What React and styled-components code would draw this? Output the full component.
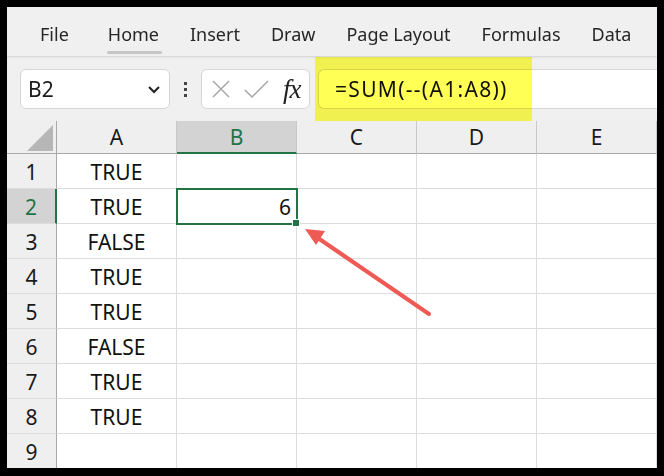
import React from 'react';
import styled, { createGlobalStyle } from 'styled-components';

const GlobalStyle = createGlobalStyle`
  html, body {
    margin: 0;
    background: #000;
  }
  body {
    padding: 7px 7px 8px 7px;
    font-family: "Noto Sans", "Open Sans", sans-serif;
  }
`;

const Window = styled.div`
  width: 650px;
  height: 461px;
  background: #f0f0f0;
  overflow: hidden;
  position: relative;
`;

const Ribbon = styled.div`
  height: 50px;
  display: flex;
  align-items: center;
  gap: 31px;
  padding: 5px 0 0 33px;
  box-sizing: border-box;
  border-bottom: 1px solid #dadada;
  box-shadow: 0 1px 2px rgba(0, 0, 0, 0.06);
  position: relative;
  z-index: 1;
`;

const Tab = styled.div`
  font-size: 18px;
  color: #262626;
  position: relative;
  margin-right: ${p => (p.$wide ? '8px' : '0')};

  ${p => p.$active && `
    &::after {
      content: '';
      position: absolute;
      left: -1px;
      right: -3px;
      bottom: -8px;
      height: 3px;
      border-radius: 2px;
      background: #c6c6c6;
    }
  `}
`;

const FormulaBar = styled.div`
  height: 64px;
  display: flex;
  align-items: center;
  padding-left: 13px;
  position: relative;
`;

const NameBox = styled.div`
  width: 150px;
  height: 40px;
  box-sizing: border-box;
  background: #fff;
  border: 1px solid #d6d6d6;
  border-radius: 6px;
  display: flex;
  align-items: center;
  justify-content: space-between;
  padding: 0 8px 0 7px;
  font-size: 21px;
  color: #1a1a1a;
`;

const Kebab = styled.div`
  width: 31px;
  display: flex;
  flex-direction: column;
  align-items: center;
  gap: 3px;

  span {
    width: 3px;
    height: 3px;
    background: #444;
  }
`;

const FxBox = styled.div`
  width: 109px;
  height: 40px;
  box-sizing: border-box;
  background: #fff;
  border: 1px solid #d6d6d6;
  border-radius: 6px;
  display: flex;
  align-items: center;
  padding-left: 9px;
  gap: 13px;
`;

const Fx = styled.span`
  font-family: "Liberation Serif", serif;
  font-style: italic;
  font-size: 27px;
  color: #222;
  margin-left: 1px;
  letter-spacing: -1px;
`;

const FormulaInput = styled.div`
  flex: 1;
  margin-left: 8px;
  height: 40px;
  box-sizing: border-box;
  background: #fff;
  border: 1px solid #d6d6d6;
  border-right: none;
  border-radius: 6px 0 0 6px;
  display: flex;
  align-items: center;
  padding-left: 16px;
  font-size: 21px;
  color: #111;
  letter-spacing: 1.3px;
`;

const Highlight = styled.div`
  position: absolute;
  left: 308px;
  top: 0;
  width: 217px;
  height: 64px;
  background: #ffff55;
  mix-blend-mode: multiply;
  pointer-events: none;
`;

const Sheet = styled.div`
  display: grid;
  grid-template-columns: 50px repeat(5, 120px);
  grid-template-rows: 33px repeat(9, 35px);
  background: #fff;
  position: relative;
`;

const Corner = styled.div`
  background: #efefef;
  border-right: 1px solid #a8a8a8;
  border-bottom: 1px solid #a8a8a8;
  box-sizing: border-box;
  position: relative;

  &::after {
    content: '';
    position: absolute;
    right: 3px;
    bottom: 2px;
    border-style: solid;
    border-width: 0 0 26px 26px;
    border-color: transparent transparent #b6b6b6 transparent;
  }
`;

const ColHead = styled.div`
  box-sizing: border-box;
  background: ${p => (p.$sel ? '#d3d3d3' : '#efefef')};
  color: ${p => (p.$sel ? '#217346' : '#1a1a1a')};
  border-right: 1px solid #c8c8c8;
  border-bottom: ${p => (p.$sel ? '2px solid #217346' : '1px solid #a8a8a8')};
  display: flex;
  align-items: center;
  justify-content: center;
  font-size: 21px;
`;

const RowHead = styled.div`
  box-sizing: border-box;
  background: ${p => (p.$sel ? '#d3d3d3' : '#efefef')};
  color: ${p => (p.$sel ? '#217346' : '#1a1a1a')};
  border-right: ${p => (p.$sel ? '2px solid #217346' : '1px solid #a8a8a8')};
  border-bottom: 1px solid #dcdcdc;
  display: flex;
  align-items: center;
  justify-content: center;
  padding-top: 2px;
  font-size: 21px;
`;

const Cell = styled.div`
  box-sizing: border-box;
  border-right: 1px solid #dcdcdc;
  border-bottom: 1px solid #dcdcdc;
  display: flex;
  align-items: center;
  justify-content: ${p => (p.$right ? 'flex-end' : 'center')};
  padding-right: ${p => (p.$right ? '5px' : '0')};
  padding-top: 2px;
  font-size: 21px;
  color: #111;
  position: relative;

  ${p => p.$active && `
    outline: 2px solid #217346;
    outline-offset: -1px;
    z-index: 2;
    &::after {
      content: '';
      position: absolute;
      right: -4px;
      bottom: -4px;
      width: 6px;
      height: 6px;
      background: #217346;
      border: 1px solid #fff;
    }
  `}
`;

const ArrowLayer = styled.svg`
  position: absolute;
  left: 0;
  top: 0;
  width: 650px;
  height: 348px;
  pointer-events: none;
  z-index: 3;
`;

const tabs = ['File', 'Home', 'Insert', 'Draw', 'Page Layout', 'Formulas', 'Data'];
const cols = ['A', 'B', 'C', 'D', 'E'];
const colA = ['TRUE', 'TRUE', 'FALSE', 'TRUE', 'TRUE', 'FALSE', 'TRUE', 'TRUE', ''];

export default function App() {
  return (
    <>
      <GlobalStyle />
      <Window>
        <Ribbon>
          {tabs.map(t => (
            <Tab key={t} $active={t === 'Home'} $wide={t === 'File'}>{t}</Tab>
          ))}
        </Ribbon>
        <FormulaBar>
          <NameBox>
            <span>B2</span>
            <svg width="14" height="10" viewBox="0 0 14 10">
              <path d="M2 3 L7 8 L12 3" fill="none" stroke="#222" strokeWidth="2" />
            </svg>
          </NameBox>
          <Kebab><span /><span /><span /></Kebab>
          <FxBox>
            <svg width="20" height="20" viewBox="0 0 20 20">
              <path d="M2 2 L18 18 M18 2 L2 18" stroke="#a6a6a6" strokeWidth="1.5" />
            </svg>
            <svg width="25" height="20" viewBox="0 0 25 20">
              <path d="M1 11 L8 18 L24 2" fill="none" stroke="#a6a6a6" strokeWidth="1.5" />
            </svg>
            <Fx>fx</Fx>
          </FxBox>
          <FormulaInput>=SUM(--(A1:A8))</FormulaInput>
          <Highlight />
        </FormulaBar>
        <Sheet>
          <Corner />
          {cols.map(c => (
            <ColHead key={c} $sel={c === 'B'}>{c}</ColHead>
          ))}
          {colA.map((v, i) => (
            <React.Fragment key={i}>
              <RowHead $sel={i === 1}>{i + 1}</RowHead>
              <Cell>{v}</Cell>
              <Cell $right $active={i === 1}>{i === 1 ? '6' : ''}</Cell>
              <Cell />
              <Cell />
              <Cell />
            </React.Fragment>
          ))}
          <ArrowLayer viewBox="0 0 650 348">
            <line x1="422" y1="193" x2="308" y2="115" stroke="#ef5a55" strokeWidth="4" strokeLinecap="round" />
            <polygon points="298,108 318,110 309,124" fill="#ef5a55" />
          </ArrowLayer>
        </Sheet>
      </Window>
    </>
  );
}
